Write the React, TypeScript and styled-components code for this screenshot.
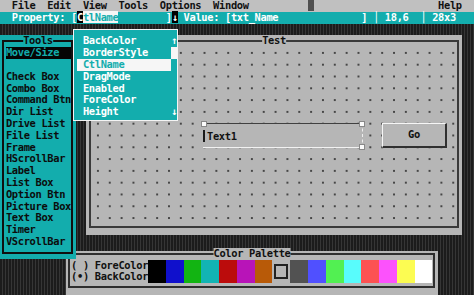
import styled, { createGlobalStyle } from "styled-components";

// text mode grid: 80 x 25 cells
const C = 474 / 80;
const R = 295 / 25;

const TEAL = "#13adad";
const GRAY = "#b6b6b6";
const MENU_GRAY = "#c0c0c0";

const GlobalStyle = createGlobalStyle`
  html, body {
    margin: 0;
    padding: 0;
    background: #202020;
  }
`;

const Screen = styled.div`
  width: 474px;
  height: 295px;
  overflow: hidden;
  display: flex;
  flex-direction: column;
  font-family: "DejaVu Sans Mono", "Liberation Mono", monospace;
  font-size: 10.4px;
  letter-spacing: ${C - 10.4 * 0.602}px;
  font-weight: bold;
  line-height: ${R}px;
  white-space: pre;
`;

const MenuBar = styled.div`
  height: ${R}px;
  background: ${MENU_GRAY};
  color: #111;
`;

const Shade = styled.span`
  background: #505050;
`;

const PropBar = styled.div`
  height: ${R}px;
  background: ${TEAL};
  color: #fff;
`;

const Field = styled.span`
  background: #f6f6f6;
  color: ${TEAL};
`;

const Cursor = styled.span`
  background: #000;
  color: #fff;
`;

const Desktop = styled.div`
  position: relative;
  flex: 1;
  background: repeating-linear-gradient(
    90deg,
    #1c1c1c 0px,
    #1c1c1c 2px,
    #363636 2px,
    #363636 3px
  );
`;

const WinTitle = styled.div<{ $bg: string; $top?: number }>`
  position: absolute;
  top: ${(p) => p.$top ?? 0}px;
  left: 50%;
  transform: translateX(-50%);
  background: ${(p) => p.$bg};
  line-height: ${R}px;
  z-index: 2;
`;

// ---- Tools window
const ToolWindow = styled.div`
  position: absolute;
  left: 0;
  top: ${R}px;
  width: 76px;
  height: 223.6px;
  box-sizing: border-box;
  padding-top: ${R}px;
  background: ${TEAL};
  color: #0c0c0c;
  z-index: 3;

  &::before {
    content: "";
    position: absolute;
    left: 2px;
    right: 3px;
    top: ${R / 2 - 1}px;
    bottom: 5px;
    border: 2px solid #101010;
  }
`;

const ToolItem = styled.div<{ $active?: boolean }>`
  height: ${R}px;
  margin-left: ${C}px;
  width: 65px;
  background: ${(p) => (p.$active ? "#050505" : "transparent")};
  color: ${(p) => (p.$active ? TEAL : "inherit")};
`;

// ---- property drop-down
const DropList = styled.div`
  position: absolute;
  left: 73px;
  top: 5.4px;
  width: 105px;
  height: 92px;
  box-sizing: border-box;
  display: flex;
  border: 1px solid #f4f4f4;
  background: ${TEAL};
  color: #fff;
  z-index: 6;
`;

const DropItems = styled.div`
  flex: 1;
  padding: 5.4px 0 0 3px;
`;

const DropItem = styled.div<{ $active?: boolean }>`
  height: ${R}px;
  padding-left: ${C}px;
  background: ${(p) => (p.$active ? "#f6f6f6" : "transparent")};
  color: ${(p) => (p.$active ? TEAL : "#fff")};
`;

const ScrollCol = styled.div`
  width: ${C}px;
  padding-top: 5.4px;
`;

const ScrollCell = styled.div<{ $thumb?: boolean }>`
  height: ${R}px;
  text-align: center;
  letter-spacing: 0;
  background: ${(p) => (p.$thumb ? "#f6f6f6" : "transparent")};
`;

// ---- form window
const FormWindow = styled.div`
  position: absolute;
  left: 86px;
  top: ${R}px;
  width: 376px;
  height: 200px;
  padding-top: ${R}px;
  box-sizing: border-box;
  background: ${GRAY};
  color: #111;
  z-index: 2;

  &::before {
    content: "";
    position: absolute;
    left: 3px;
    right: 3px;
    top: ${R / 2 - 1}px;
    bottom: 7px;
    border: 2px solid #3a3a3a;
  }
`;

const Canvas = styled.div`
  position: relative;
  margin-left: 6.4px;
  width: ${31 * 2 * C}px;
  height: ${15 * R}px;
  background-image: radial-gradient(circle at center, #464646 0 1px, transparent 1.5px);
  background-size: ${2 * C}px ${R}px;
`;

const TextBox = styled.div`
  position: absolute;
  left: 110.6px;
  top: ${6.5 * R - 0.5}px;
  width: 160px;
  height: ${2 * R + 1}px;
  box-sizing: border-box;
  padding-top: 5.4px;
  border-top: 1px solid #404040;
  border-bottom: 1px solid #f2f2f2;
  border-right: 1px dashed #eeeeee;
  background: ${GRAY};
`;

const Caret = styled.span`
  display: inline-block;
  width: 2px;
  height: 12px;
  margin-right: 2px;
  vertical-align: -2px;
  background: #1a1a1a;
`;

const Handle = styled.div<{ $x: "l" | "r"; $y: "t" | "b" }>`
  position: absolute;
  ${(p) => (p.$x === "l" ? "left: -2px;" : "right: -3px;")}
  ${(p) => (p.$y === "t" ? "top: -3px;" : "bottom: -3px;")}
  width: 4px;
  height: 4px;
  background: #fbfbfb;
  border: 0.5px solid #888;
`;

const Button = styled.div`
  position: absolute;
  left: 289.6px;
  top: ${6.5 * R - 0.5}px;
  width: 65px;
  height: ${2 * R + 1}px;
  box-sizing: border-box;
  display: flex;
  align-items: center;
  justify-content: center;
  border-left: 1px solid #f6f6f6;
  border-top: 1px solid #f6f6f6;
  border-right: 2px solid #303030;
  border-bottom: 2px solid #303030;
  background: ${GRAY};
  color: #111;
`;

// ---- palette window
const PaletteWindow = styled.div`
  position: absolute;
  left: 66px;
  top: 227.4px;
  width: 372px;
  height: 48px;
  box-sizing: border-box;
  padding: 8.6px 0 0 5.1px;
  background: ${GRAY};
  color: #111;
  display: flex;
  z-index: 1;

  &::before {
    content: "";
    position: absolute;
    left: 2px;
    right: 3px;
    top: 2px;
    height: 31px;
    border: 2px solid #2e2e2e;
  }
`;

const Radios = styled.div`
  width: ${13 * C}px;
  position: relative;
`;

const Swatches = styled.div`
  display: flex;
  position: relative;
`;

const Swatch = styled.div<{ $color: string }>`
  width: ${3 * C}px;
  height: ${2 * R}px;
  background: ${(p) => p.$color};
  display: flex;
  align-items: center;
  justify-content: center;
`;

const EmptyBox = styled.div`
  width: 10px;
  height: 11px;
  border: 2px solid #222;
  margin-left: -1px;
`;

const tools = [
  "Check Box",
  "Combo Box",
  "Command Btn",
  "Dir List",
  "Drive List",
  "File List",
  "Frame",
  "HScrollBar",
  "Label",
  "List Box",
  "Option Btn",
  "Picture Box",
  "Text Box",
  "Timer",
  "VScrollBar",
];

const props = ["BackColor", "BorderStyle", "CtlName", "DragMode", "Enabled", "ForeColor", "Height"];

const colors = [
  "#000000",
  "#1010cc",
  "#12b412",
  "#12b4b4",
  "#bb0c0c",
  "#b814b8",
  "#b85a08",
  "",
  "#525252",
  "#5050ff",
  "#52f052",
  "#58fcfc",
  "#fc5252",
  "#fc52fc",
  "#fcfc52",
  "#ffffff",
];

export default function App() {
  return (
    <>
      <GlobalStyle />
      <Screen>
        <MenuBar>
          {"  File  Edit  View  Tools  Options  Window          "}
          <Shade> </Shade>
          {"                     Help  "}
        </MenuBar>
        <PropBar>
          {"  Property: ["}
          <Cursor>C</Cursor>
          <Field>tlName</Field>
          {"        ]"}
          <Cursor>↓</Cursor>
          {" Value: [txt_Name              ] │ 18,6  │ 28x3"}
        </PropBar>
        <Desktop>
          <ToolWindow>
            <WinTitle $bg={TEAL}>Tools</WinTitle>
            <ToolItem $active>Move/Size</ToolItem>
            <ToolItem />
            {tools.map((t) => (
              <ToolItem key={t}>{t}</ToolItem>
            ))}
          </ToolWindow>

          <DropList>
            <DropItems>
              {props.map((p) => (
                <DropItem key={p} $active={p === "CtlName"}>
                  {p}
                </DropItem>
              ))}
            </DropItems>
            <ScrollCol>
              <ScrollCell>↑</ScrollCell>
              <ScrollCell $thumb />
              <ScrollCell />
              <ScrollCell />
              <ScrollCell />
              <ScrollCell />
              <ScrollCell>↓</ScrollCell>
            </ScrollCol>
          </DropList>

          <FormWindow>
            <WinTitle $bg={GRAY}>Test</WinTitle>
            <Canvas>
              <TextBox>
                <Caret />
                Text1
                <Handle $x="l" $y="t" />
                <Handle $x="r" $y="t" />
                <Handle $x="r" $y="b" />
              </TextBox>
              <Button>Go</Button>
            </Canvas>
          </FormWindow>

          <PaletteWindow>
            <WinTitle $bg={GRAY} $top={-3.2}>
              Color Palette
            </WinTitle>
            <Radios>
              <div>( ) ForeColor</div>
              <div>(•) BackColor</div>
            </Radios>
            <Swatches>
              {colors.map((c, i) =>
                c ? (
                  <Swatch key={i} $color={c} />
                ) : (
                  <Swatch key={i} $color={GRAY}>
                    <EmptyBox />
                  </Swatch>
                )
              )}
            </Swatches>
          </PaletteWindow>
        </Desktop>
      </Screen>
    </>
  );
}
